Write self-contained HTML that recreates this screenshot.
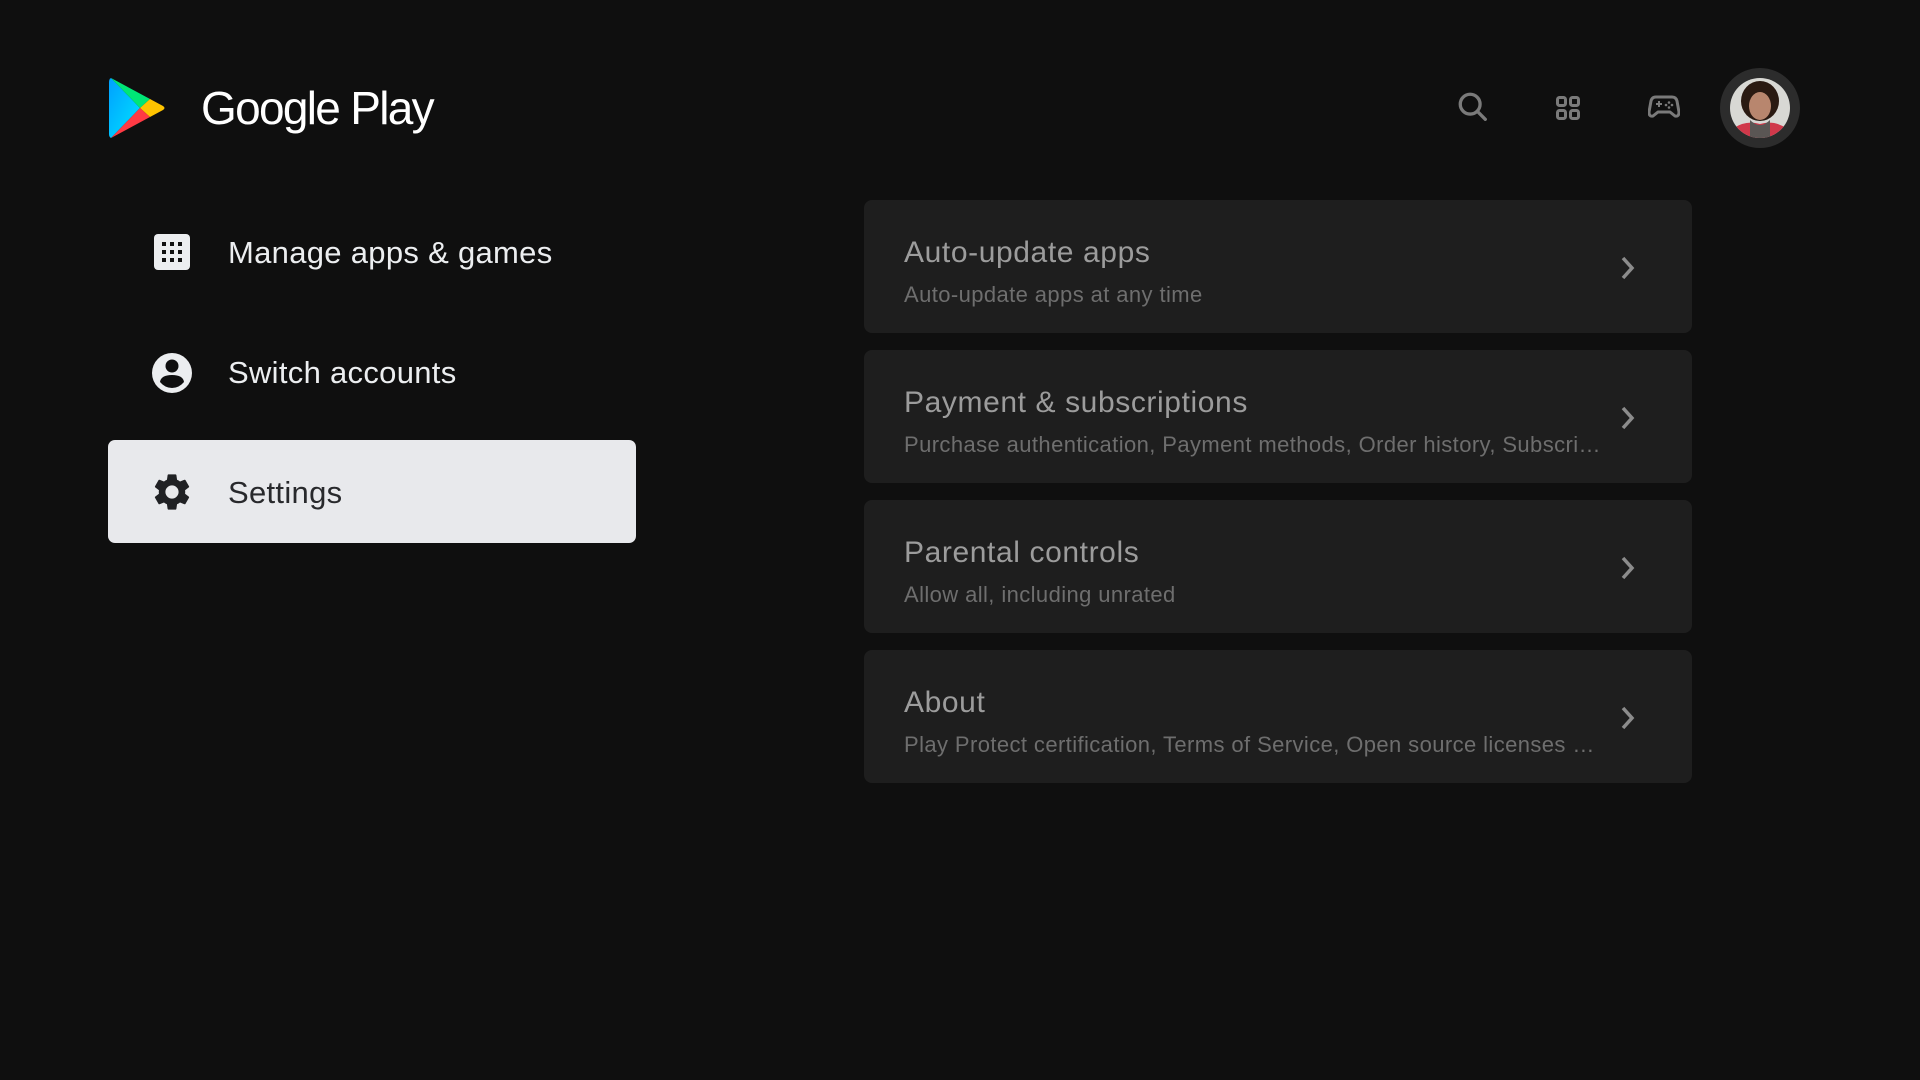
<!DOCTYPE html>
<html><head><meta charset="utf-8"><style>
*{margin:0;padding:0;box-sizing:border-box}
body{width:1920px;height:1080px;background:#0f0f0f;font-family:"Liberation Sans",sans-serif;position:relative;overflow:hidden}
.abs{position:absolute}
.logo-t{left:201px;top:80px;font-size:46px;color:#fff;letter-spacing:-1.7px;line-height:56px}
.menu{left:228px;font-size:31px;color:#eceef0;line-height:40px;letter-spacing:0.3px}
.sel{left:108px;top:440px;width:528px;height:103px;background:#e8e9ec;border-radius:7px}
.card{left:864px;width:828px;height:133px;background:#1e1e1e;border-radius:8px}
.card .t{position:absolute;left:40px;top:35px;font-size:30px;color:#9c9c9c;line-height:36px;letter-spacing:0.6px}
.card .s{position:absolute;left:40px;top:81px;font-size:22px;color:#6e6e6e;line-height:28px;width:702px;white-space:nowrap;overflow:hidden;text-overflow:ellipsis;letter-spacing:0.4px}
.card svg{position:absolute;left:754px;top:54px}
</style></head><body>
<svg class="abs" style="left:109px;top:77px" width="56" height="62" viewBox="0 0 56 62">
<defs><linearGradient id="g1" x1="0" y1="0" x2="1" y2="1"><stop offset="0" stop-color="#00a0ff"/><stop offset="1" stop-color="#00e3ff"/></linearGradient></defs>
<path d="M2 1 L31 31 L2 61 Q0 60 0 57 L0 5 Q0 2 2 1Z" fill="url(#g1)"/>
<path d="M2 1 L41 22 L31 31Z" fill="#00e676"/>
<path d="M41 22 L54 29 Q57 31 54 33 L41 40 L31 31Z" fill="#ffc400"/>
<path d="M31 31 L41 40 L2 61Z" fill="#ff3a44"/>
</svg>
<div class="abs logo-t">Google Play</div>

<svg class="abs" style="left:1456px;top:90px" width="34" height="34" viewBox="0 0 36 36"><circle cx="15" cy="15" r="10.5" fill="none" stroke="#7a7a7a" stroke-width="3.5"/><path d="M23 23 L31 31" stroke="#7a7a7a" stroke-width="3.5" stroke-linecap="round"/></svg>
<svg class="abs" style="left:1556px;top:96px" width="24" height="24" viewBox="0 0 24 24" fill="none" stroke="#7a7a7a" stroke-width="3"><rect x="1.5" y="1.5" width="8" height="8" rx="2"/><rect x="14.5" y="1.5" width="8" height="8" rx="2"/><rect x="1.5" y="14.5" width="8" height="8" rx="2"/><rect x="14.5" y="14.5" width="8" height="8" rx="2"/></svg>
<svg class="abs" style="left:1648px;top:95px" width="32" height="24" viewBox="0 0 32 24"><path d="M8 2 H24 Q28 2 29 6 L31 17 Q31 22 27 21 L22 17 H10 L5 21 Q1 22 1 17 L3 6 Q4 2 8 2Z" fill="none" stroke="#7a7a7a" stroke-width="3" stroke-linejoin="round"/><path d="M8 9 H14 M11 6 V12" stroke="#7a7a7a" stroke-width="2"/><circle cx="21" cy="7.5" r="1.3" fill="#7a7a7a"/><circle cx="24" cy="10" r="1.3" fill="#7a7a7a"/><circle cx="18" cy="10" r="1.3" fill="#7a7a7a"/><circle cx="21" cy="12.5" r="1.3" fill="#7a7a7a"/></svg>
<svg class="abs" style="left:1720px;top:68px" width="80" height="80" viewBox="0 0 80 80">
<defs><clipPath id="c"><circle cx="40" cy="40" r="30"/></clipPath></defs>
<circle cx="40" cy="40" r="40" fill="#2c2c2c"/>
<g clip-path="url(#c)"><rect width="80" height="80" fill="#d8d8d4"/>
<ellipse cx="40" cy="33" rx="19" ry="20" fill="#2a1a12"/>
<ellipse cx="40" cy="38" rx="11" ry="14" fill="#b8866e"/>
<path d="M10 80 L14 60 Q26 52 40 56 Q54 52 66 60 L70 80Z" fill="#d0384a"/>
<path d="M30 52 Q40 62 50 52 L50 72 L30 72Z" fill="#5a5654"/></g>
</svg>

<svg class="abs" style="left:154px;top:234px" width="36" height="36" viewBox="0 0 36 36"><rect width="36" height="36" rx="4" fill="#eceef0"/><g fill="#111"><rect x="8" y="8" width="4" height="4"/><rect x="16" y="8" width="4" height="4"/><rect x="24" y="8" width="4" height="4"/><rect x="8" y="16" width="4" height="4"/><rect x="16" y="16" width="4" height="4"/><rect x="24" y="16" width="4" height="4"/><rect x="8" y="24" width="4" height="4"/><rect x="16" y="24" width="4" height="4"/><rect x="24" y="24" width="4" height="4"/></g></svg>
<div class="abs menu" style="top:233px">Manage apps &amp; games</div>
<svg class="abs" style="left:151px;top:352px" width="42" height="42" viewBox="0 0 42 42"><circle cx="21" cy="21" r="20" fill="#eceef0"/><circle cx="21" cy="14" r="6.5" fill="#0f0f0f"/><path d="M9 30 Q10 23 21 23 Q32 23 33 30 Q28 36 21 36 Q14 36 9 30Z" fill="#0f0f0f"/></svg>
<div class="abs menu" style="top:353px">Switch accounts</div>
<div class="abs sel"></div>
<svg class="abs" style="left:150px;top:470px" width="44" height="44" viewBox="0 0 24 24"><path fill="#202124" d="M19.14 12.94c.04-.3.06-.61.06-.94 0-.32-.02-.64-.07-.94l2.030-1.58a.49.49 0 0 0 .12-.61l-1.92-3.32a.49.49 0 0 0-.59-.22l-2.39.96c-.5-.38-1.03-.7-1.62-.94l-.36-2.54a.48.48 0 0 0-.48-.41h-3.84c-.24 0-.43.17-.47.41l-.36 2.54c-.59.24-1.13.57-1.62.94l-2.39-.96a.49.49 0 0 0-.59.22L2.74 8.87c-.12.21-.08.47.12.61l2.03 1.58c-.05.3-.09.63-.09.94s.02.64.07.94l-2.03 1.58a.49.49 0 0 0-.12.61l1.92 3.32c.12.22.37.29.59.22l2.39-.96c.5.38 1.030.7 1.62.94l.36 2.54c.05.24.24.41.48.41h3.84c.24 0 .44-.17.47-.41l.36-2.54c.59-.24 1.13-.56 1.62-.94l2.39.96c.22.08.47 0 .59-.22l1.92-3.32c.12-.22.07-.47-.12-.61l-2.010-1.58zM12 15.6c-1.98 0-3.6-1.62-3.6-3.6s1.62-3.6 3.6-3.6 3.6 1.62 3.6 3.6-1.62 3.6-3.6 3.6z"/></svg>
<div class="abs menu" style="top:473px;color:#28292c">Settings</div>

<div class="abs card" style="top:200px"><div class="t">Auto-update apps</div><div class="s">Auto-update apps at any time</div><svg width="20" height="28" viewBox="0 0 20 28"><path d="M5 4 L14 14 L5 24" fill="none" stroke="#8c8c8c" stroke-width="3.5"/></svg></div>
<div class="abs card" style="top:350px"><div class="t">Payment &amp; subscriptions</div><div class="s">Purchase authentication, Payment methods, Order history, Subscriptions</div><svg width="20" height="28" viewBox="0 0 20 28"><path d="M5 4 L14 14 L5 24" fill="none" stroke="#8c8c8c" stroke-width="3.5"/></svg></div>
<div class="abs card" style="top:500px"><div class="t">Parental controls</div><div class="s">Allow all, including unrated</div><svg width="20" height="28" viewBox="0 0 20 28"><path d="M5 4 L14 14 L5 24" fill="none" stroke="#8c8c8c" stroke-width="3.5"/></svg></div>
<div class="abs card" style="top:650px"><div class="t">About</div><div class="s">Play Protect certification, Terms of Service, Open source licenses and more</div><svg width="20" height="28" viewBox="0 0 20 28"><path d="M5 4 L14 14 L5 24" fill="none" stroke="#8c8c8c" stroke-width="3.5"/></svg></div>
</body></html>
